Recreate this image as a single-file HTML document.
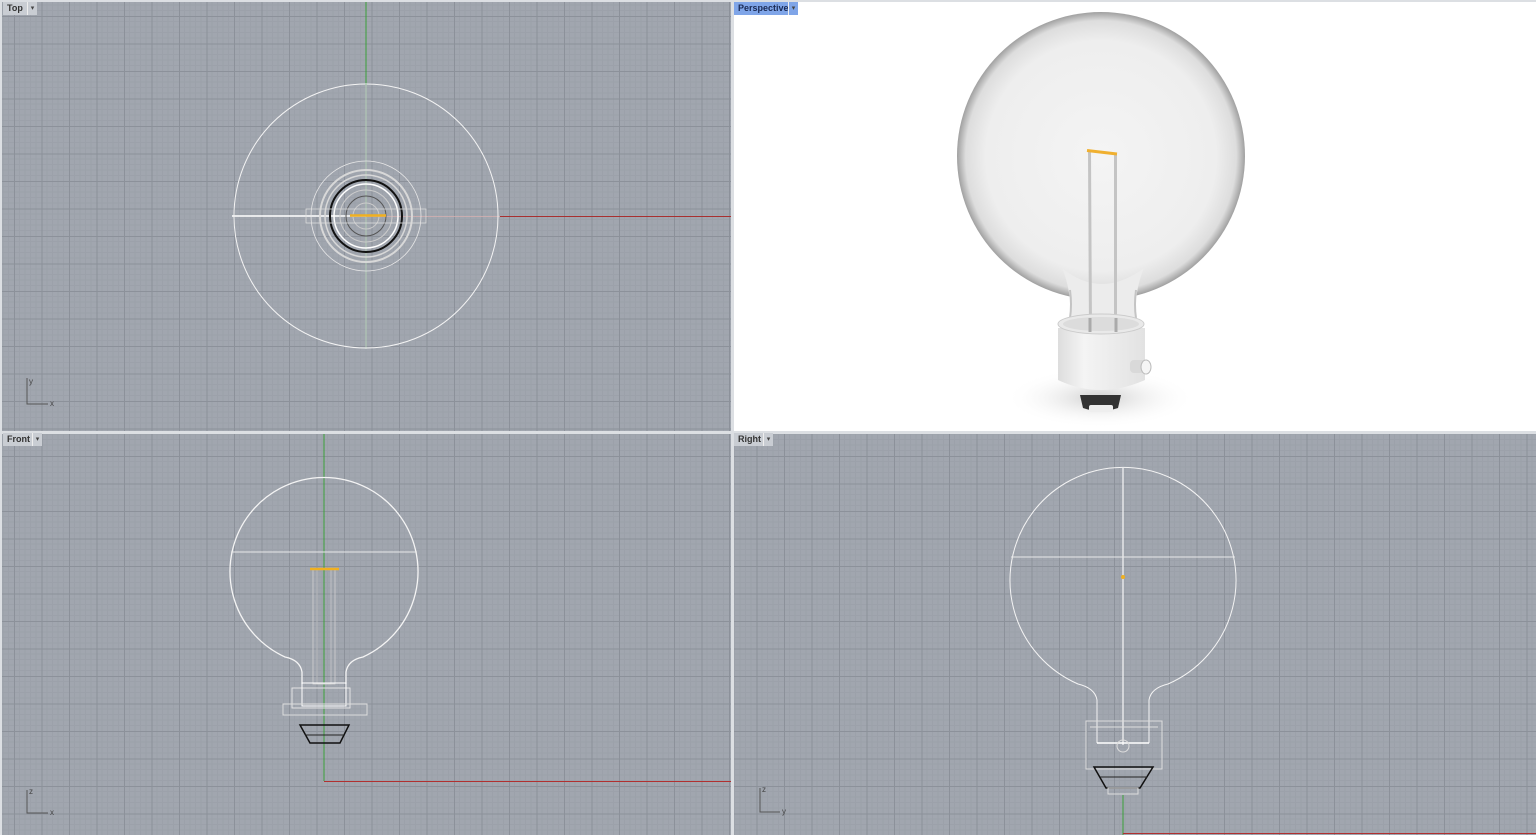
<!DOCTYPE html>
<html><head><meta charset="utf-8"><style>
html,body{margin:0;padding:0;background:#dcdfe3;width:1536px;height:835px;overflow:hidden;font-family:"Liberation Sans",sans-serif}
svg{position:absolute;left:0;top:0}
.lbl{position:absolute;height:13px;font-size:9px;font-weight:bold;color:#333;background:#c9cdd3;line-height:13px;padding:0 4px;box-sizing:border-box}
.dd{position:absolute;width:9px;height:13px;background:#c9cdd3;border-left:1px solid #eee;font-size:7px;line-height:13px;text-align:center;color:#444}
</style></head><body>
<svg width="1536" height="835" viewBox="0 0 1536 835">
<defs>
<pattern id="g" width="27.5" height="27.5" patternUnits="userSpaceOnUse" x="14" y="16">
<rect width="27.5" height="27.5" fill="#a1a6af"/>
<path d="M5.5 0V27.5M11 0V27.5M16.5 0V27.5M22 0V27.5M0 5.5H27.5M0 11H27.5M0 16.5H27.5M0 22H27.5" stroke="#9ca1aa" stroke-width="1"/>
<path d="M0.5 0V27.5M0 0.5H27.5" stroke="#8c919a" stroke-width="1"/>
</pattern>
<radialGradient id="sph" cx="0.5" cy="0.5" r="0.5">
<stop offset="0" stop-color="#f4f4f4"/><stop offset="0.8" stop-color="#eeeeee"/><stop offset="0.94" stop-color="#dddddd"/><stop offset="1" stop-color="#a0a0a0"/>
</radialGradient>
<radialGradient id="sh" cx="0.5" cy="0.5" r="0.5">
<stop offset="0" stop-color="#cfcfcf"/><stop offset="1" stop-color="#fff" stop-opacity="0"/>
</radialGradient>
<linearGradient id="cyl" x1="0" x2="1"><stop offset="0" stop-color="#ddd"/><stop offset="0.3" stop-color="#f4f4f4"/><stop offset="1" stop-color="#e2e2e2"/></linearGradient>
</defs>
<rect x="2" y="2" width="729" height="429" fill="url(#g)"/>
<rect x="734" y="2" width="802" height="429" fill="#fff"/>
<rect x="2" y="434" width="729" height="401" fill="url(#g)"/>
<rect x="734" y="434" width="802" height="401" fill="url(#g)"/>

<g fill="none">
<line x1="366" y1="2" x2="366" y2="85" stroke="#3aa03a"/>
<line x1="366" y1="85" x2="366" y2="349" stroke="#b8d8b8" stroke-width="0.8"/>
<line x1="500" y1="216.5" x2="731" y2="216.5" stroke="#a83030"/>
<line x1="366" y1="216.5" x2="500" y2="216.5" stroke="#d8b0b0" stroke-width="0.8"/>
<line x1="232" y1="216" x2="366" y2="216" stroke="#fff" stroke-width="1.5"/>
<circle cx="366" cy="216" r="132" stroke="#f4f4f4"/>
<circle cx="366" cy="216" r="55" stroke="#e8e8e8" stroke-width="0.8"/>
<circle cx="366" cy="216" r="46" stroke="#d8d8d8" stroke-width="2"/>
<circle cx="366" cy="216" r="41" stroke="#d8d8d8" stroke-width="1.5"/>
<circle cx="366" cy="216" r="36" stroke="#111" stroke-width="2"/>
<circle cx="366" cy="216" r="32" stroke="#fff" stroke-width="1.5"/>
<circle cx="366" cy="216" r="26" stroke="#ccc"/>
<circle cx="366" cy="216" r="20" stroke="#555"/>
<circle cx="366" cy="216" r="13" stroke="#ccc"/>
<rect x="306" y="209" width="120" height="14" stroke="#ddd" stroke-width="0.8"/>
<line x1="350" y1="215.5" x2="386" y2="215.5" stroke="#f0b020" stroke-width="2.5"/>
<path d="M27 378V404H48" stroke="#555"/>
</g>
<text x="29" y="384" font-size="8" fill="#444">y</text><text x="50" y="406" font-size="8" fill="#444">x</text>

<ellipse cx="1100" cy="398" rx="95" ry="30" fill="url(#sh)"/>
<circle cx="1101" cy="156" r="144" fill="url(#sph)"/>
<path d="M1062 268 Q1072 292 1070 318 H1136 Q1134 292 1144 268 Q1101 300 1062 268Z" fill="#ececec"/>
<path d="M1070 290 Q1072 305 1070 318" stroke="#c4c4c4" fill="none" stroke-width="2"/>
<path d="M1136 290 Q1134 305 1136 318" stroke="#c4c4c4" fill="none" stroke-width="2"/>
<line x1="1089.5" y1="152" x2="1090.5" y2="332" stroke="#c4c4c4" stroke-width="3"/>
<line x1="1115.5" y1="154" x2="1115.5" y2="332" stroke="#c4c4c4" stroke-width="3"/>
<line x1="1087" y1="150.5" x2="1117" y2="154" stroke="#f0b030" stroke-width="3"/>
<path d="M1080 395 H1121 L1118 408 Q1100 414 1083 408Z" fill="#333"/>
<rect x="1089" y="405" width="24" height="7" rx="2" fill="#eee"/>
<path d="M1058 328 V380 Q1100 400 1145 380 V328Z" fill="url(#cyl)"/>
<ellipse cx="1101" cy="324" rx="43" ry="10" fill="#e9e9e9" stroke="#ccc"/>
<ellipse cx="1101" cy="324" rx="38" ry="7" fill="#dcdcdc"/>
<line x1="1090" y1="318" x2="1090" y2="332" stroke="#aaa" stroke-width="3"/>
<line x1="1116" y1="318" x2="1116" y2="332" stroke="#aaa" stroke-width="3"/>
<rect x="1130" y="360" width="16" height="13" rx="4" fill="#d9d9d9"/>
<ellipse cx="1146" cy="367" rx="5" ry="7" fill="#f5f5f5" stroke="#bbb"/>

<g fill="none">
<line x1="324" y1="434" x2="324" y2="781" stroke="#3aa03a"/>
<line x1="324" y1="781.5" x2="731" y2="781.5" stroke="#b03030"/>
<path d="M302 684 V672 Q300 660 285 657 A94 94 0 1 1 363 657 Q348 660 346 672 V684" stroke="#f4f4f4" stroke-width="1.3"/>
<line x1="231" y1="552" x2="417" y2="552" stroke="#e8e8e8"/>
<rect x="313" y="569" width="22" height="115" stroke="#d0d0d0" stroke-width="0.8"/>
<rect x="317" y="569" width="14" height="115" stroke="#d0d0d0" stroke-width="0.6"/>
<line x1="310" y1="569" x2="339" y2="569" stroke="#f0b020" stroke-width="2.5"/>
<rect x="292" y="688" width="58" height="20" stroke="#e4e4e4"/>
<rect x="302" y="683" width="44" height="23" stroke="#fff"/>
<rect x="283" y="704" width="84" height="11" stroke="#ddd"/>
<path d="M300 725 H349 L340 743 H310Z" stroke="#111" stroke-width="1.5"/>
<line x1="305" y1="735" x2="344" y2="735" stroke="#222"/>
<path d="M27 790V813H48" stroke="#555"/>
</g>
<text x="29" y="794" font-size="8" fill="#444">z</text><text x="50" y="815" font-size="8" fill="#444">x</text>

<g fill="none">
<line x1="1123" y1="795" x2="1123" y2="835" stroke="#3aa03a"/>
<line x1="1123" y1="833.5" x2="1536" y2="833.5" stroke="#b03030"/>
<line x1="1123" y1="468" x2="1123" y2="745" stroke="#f0f0f0" stroke-width="1.3"/>
<path d="M1097 743 V700 Q1095 688 1078 684 A113 113 0 1 1 1168 684 Q1151 688 1149 700 V743" stroke="#f4f4f4"/>
<line x1="1011" y1="557" x2="1235" y2="557" stroke="#e8e8e8"/>
<circle cx="1123" cy="577" r="2" fill="#f0b020"/>
<rect x="1086" y="721" width="76" height="48" stroke="#ddd"/>
<line x1="1090" y1="727" x2="1158" y2="727" stroke="#ddd"/>
<line x1="1097" y1="743" x2="1149" y2="743" stroke="#fff" stroke-width="1.5"/>
<circle cx="1123" cy="746" r="6" stroke="#ddd"/>
<path d="M1094 767 H1153 L1140 788 H1106Z" stroke="#111" stroke-width="1.5"/>
<line x1="1100" y1="777" x2="1147" y2="777" stroke="#222"/>
<rect x="1108" y="788" width="30" height="6" stroke="#ddd"/>
<path d="M760 788V812H780" stroke="#555"/>
</g>
<text x="762" y="792" font-size="8" fill="#444">z</text><text x="782" y="814" font-size="8" fill="#444">y</text>
</svg>
<div class="lbl" style="left:3px;top:2px;width:24px">Top</div><div class="dd" style="left:27px;top:2px">▾</div>
<div class="lbl" style="left:734px;top:2px;width:54px;background:#7fa5e8;color:#1a2a55">Perspective</div><div class="dd" style="left:788px;top:2px;background:#7fa5e8">▾</div>
<div class="lbl" style="left:3px;top:433px;width:29px">Front</div><div class="dd" style="left:32px;top:433px">▾</div>
<div class="lbl" style="left:734px;top:433px;width:29px">Right</div><div class="dd" style="left:763px;top:433px">▾</div>
</body></html>
